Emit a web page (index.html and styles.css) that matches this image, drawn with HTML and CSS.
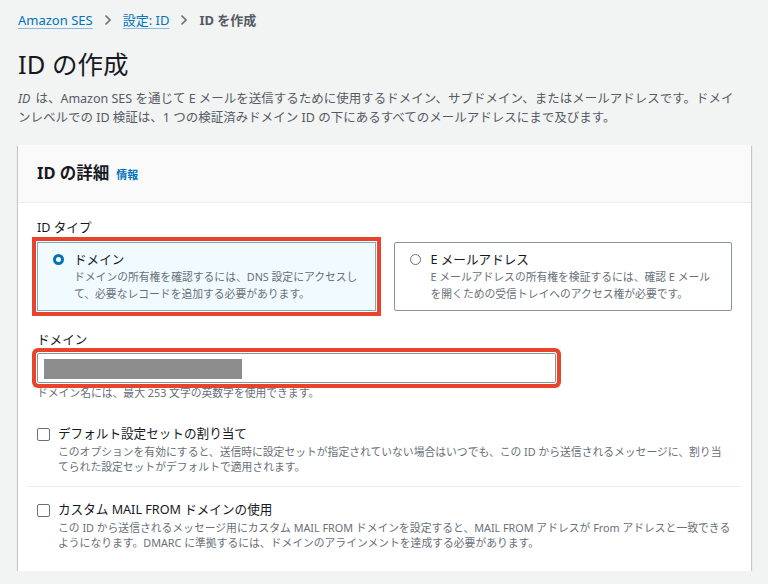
FILE: index.html
```html
<!DOCTYPE html>
<html lang="ja">
<head>
<meta charset="UTF-8" />
<meta name="viewport" content="width=device-width, initial-scale=1" />
<title>ID の作成</title>
<link rel="stylesheet" href="styles.css">
</head>
<body>
  <div class="page">
    <nav class="breadcrumbs">
      <a href="#">Amazon SES</a>
      <svg class="chevron" width="8" height="12" viewBox="0 0 8 12"><path d="M1.5 1.5l4.5 4.5-4.5 4.5" /></svg>
      <a href="#">設定: ID</a>
      <svg class="chevron" width="8" height="12" viewBox="0 0 8 12"><path d="M1.5 1.5l4.5 4.5-4.5 4.5" /></svg>
      <span class="current">ID を作成</span>
    </nav>

    <h1>ID の作成</h1>
    <p class="page-desc"><span class="term">ID</span>は、Amazon SES を通じて E メールを送信するために使用するドメイン、サブドメイン、またはメールアドレスです。ドメインレベルでの ID 検証は、1 つの検証済みドメイン ID の下にあるすべてのメールアドレスにまで及びます。</p>

    <section class="card">
      <div class="card-header">
        <h2>ID の詳細</h2>
        <a href="#" class="info">情報</a>
      </div>
      <div class="card-body">
        <div class="field">
          <div class="field-label">ID タイプ</div>
          <div class="tiles">
            <label class="tile selected highlight">
              <span class="radio checked"></span>
              <span class="tile-text">
                <span class="tile-title">ドメイン</span>
                <span class="tile-desc">ドメインの所有権を確認するには、DNS 設定にアクセスして、必要なレコードを追加する必要があります。</span>
              </span>
            </label>
            <label class="tile">
              <span class="radio"></span>
              <span class="tile-text">
                <span class="tile-title">E メールアドレス</span>
                <span class="tile-desc">E メールアドレスの所有権を検証するには、確認 E メールを開くための受信トレイへのアクセス権が必要です。</span>
              </span>
            </label>
          </div>
        </div>

        <div class="field domain-field">
          <div class="field-label">ドメイン</div>
          <div class="text-input highlight"><span class="redacted"></span></div>
          <div class="hint">ドメイン名には、最大 253 文字の英数字を使用できます。</div>
        </div>

        <div class="option first">
          <span class="checkbox"></span>
          <div class="option-text">
            <div class="option-title">デフォルト設定セットの割り当て</div>
            <div class="option-desc">このオプションを有効にすると、送信時に設定セットが指定されていない場合はいつでも、この ID から送信されるメッセージに、割り当てられた設定セットがデフォルトで適用されます。</div>
          </div>
        </div>
        <hr class="divider">
        <div class="option">
          <span class="checkbox"></span>
          <div class="option-text">
            <div class="option-title">カスタム MAIL FROM ドメインの使用</div>
            <div class="option-desc">この ID から送信されるメッセージ用にカスタム MAIL FROM ドメインを設定すると、MAIL FROM アドレスが From アドレスと一致できるようになります。DMARC に準拠するには、ドメインのアラインメントを達成する必要があります。</div>
          </div>
        </div>
      </div>
    </section>
  </div>
</body>
</html>
```

FILE: styles.css
```css
body {
  margin: 0;
  background: #f2f3f3;
  font-family: 'Noto Sans', 'Noto Sans CJK JP', sans-serif;
  color: #16191f;
}
.page {
  padding: 11px 17px 0 18px;
}
.breadcrumbs {
  display: flex;
  align-items: center;
  font-size: 13px;
  line-height: 18px;
}
.breadcrumbs a {
  color: #0073bb;
  text-decoration: underline;
  text-decoration-color: #8cb8dc;
  text-underline-offset: 3px;
}
.chevron {
  margin: 0 11px;
  fill: none;
  stroke: #687078;
  stroke-width: 1.6;
}
.breadcrumbs .current {
  color: #545b64;
  font-weight: 700;
}
h1 {
  margin: 19px 0 0;
  font-size: 25.5px;
  line-height: 32px;
  font-weight: 400;
}
.page-desc {
  margin: 9px 0 0;
  max-width: 722px;
  font-size: 12.5px;
  line-height: 19px;
  color: #545b64;
}
.page-desc .term {
  font-style: italic;
  margin-right: 5px;
}
.card {
  margin-top: 18px;
  background: #fff;
  box-shadow: 0 1px 1px 0 rgba(0,28,36,0.3), 1px 1px 1px 0 rgba(0,28,36,0.15), -1px 1px 1px 0 rgba(0,28,36,0.15);
}
.card-header {
  display: flex;
  align-items: baseline;
  gap: 7px;
  padding: 15px 19px 17px;
  background: #fafafa;
  border-bottom: 1px solid #eaeded;
}
.card-header h2 {
  margin: 0;
  font-size: 16.5px;
  line-height: 25px;
  font-weight: 700;
}
.card-header .info {
  color: #0073bb;
  font-size: 11px;
  font-weight: 700;
  text-decoration: none;
}
.card-body {
  padding: 16px 19px 21px;
}
.field-label {
  font-size: 12.6px;
  line-height: 18px;
}
.tiles {
  margin-top: 5px;
  display: grid;
  grid-template-columns: 1fr 1fr;
  gap: 18px;
}
.tile {
  display: flex;
  align-items: flex-start;
  gap: 10px;
  padding: 8px 12px 8px 15px;
  border: 1px solid #879596;
  border-radius: 2px;
  background: #fff;
}
.tile.selected {
  background: #f1faff;
  border-color: #7ea9cc;
}
.highlight {
  border-radius: 0;
  box-shadow: 0 0 0 1px #fff, 0 0 0 5px #e8432b;
}
.radio {
  flex: none;
  width: 11px;
  height: 11px;
  margin-top: 3px;
  box-sizing: border-box;
  border: 1px solid #687078;
  border-radius: 50%;
  background: #fff;
}
.radio.checked {
  border: 3.5px solid #0073bb;
}
.tile-text {
  display: flex;
  flex-direction: column;
}
.tile-title {
  font-size: 12.6px;
  line-height: 17px;
}
.tile-desc {
  font-size: 10.8px;
  line-height: 17px;
  color: #687078;
}
.domain-field {
  margin-top: 20px;
}
.text-input {
  margin-top: 4px;
  width: 519px;
  height: 30px;
  box-sizing: border-box;
  padding: 5px 6px;
  border: 1px solid #879596;
  border-radius: 2px;
  background: #fff;
}
.redacted {
  display: block;
  width: 198px;
  height: 20px;
  background: #8c8c8c;
}
.hint {
  margin-top: 3px;
  font-size: 10.8px;
  line-height: 14px;
  color: #687078;
}
.option {
  display: flex;
  align-items: flex-start;
  gap: 8px;
  margin-top: 13px;
}
.option.first {
  margin-top: 24px;
}
.checkbox {
  flex: none;
  width: 13px;
  height: 13px;
  margin-top: 3.5px;
  box-sizing: border-box;
  border: 1px solid #687078;
  border-radius: 2px;
  background: #fff;
}
.option-title {
  font-size: 12.6px;
  line-height: 20px;
}
.option-desc {
  font-size: 10.8px;
  line-height: 15px;
  color: #687078;
}
.divider {
  margin: 12px -10px 0;
  border: none;
  border-top: 1px solid #eaeded;
}
```
